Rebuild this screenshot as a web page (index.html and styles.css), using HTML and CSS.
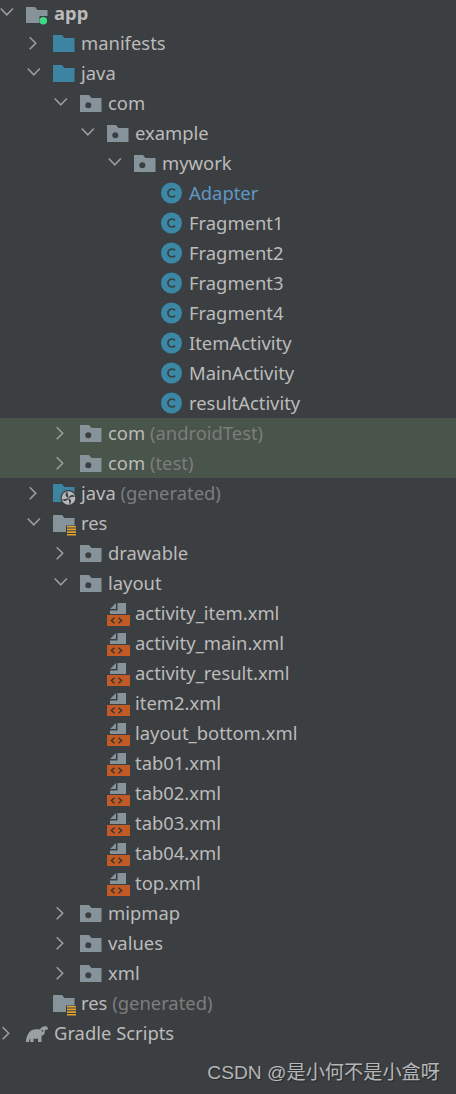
FILE: index.html
```html
<!DOCTYPE html>
<html lang="en">
<head>
<meta charset="utf-8">
<title>Project tree</title>
<link rel="stylesheet" href="styles.css">
</head>
<body>
<svg class="defs" width="0" height="0" aria-hidden="true">
  <defs>
    <symbol id="open" viewBox="0 0 26 30"><path d="M0.7 10.5 L6.8 16.8 L12.9 10.5" fill="none" stroke="#9a9c9e" stroke-width="1.6"/></symbol>
    <symbol id="closed" viewBox="0 0 26 30"><path d="M2.7 9.2 L8.7 15.2 L2.7 21.2" fill="none" stroke="#9a9c9e" stroke-width="1.6"/></symbol>
    <symbol id="pkg" viewBox="0 0 22 30"><path d="M0 7 H9 L11.5 10 H21.5 V24 H0 Z" fill="#87939a"/><circle cx="8.3" cy="17.3" r="3" fill="#3c3f41"/></symbol>
    <symbol id="src" viewBox="0 0 22 30"><path d="M0 7 H9 L11.5 10 H21.5 V24 H0 Z" fill="#3d84a3"/></symbol>
    <symbol id="gen" viewBox="0 0 22 30"><path d="M0 6 H9 L11.5 9 H21.5 V24 H0 Z" fill="#3d84a3"/><circle cx="15.5" cy="20" r="8" fill="#3c3f41"/><circle cx="15.5" cy="20" r="6.8" fill="#b4b8ba"/><path d="M15.5 20 C11.5 18.5 12 15 14.5 13.5 C14.5 16.5 15.5 17.5 15.5 20 C17 16 20.5 16.5 22 18.5 C19 18.5 18 19.5 15.5 20 C19 21.5 18.5 25 16.5 26.5 C16.5 23.5 15.5 22.5 15.5 20 C14 24 10.5 23.5 9 21.5 C12 21.5 13 20.5 15.5 20 Z" fill="#3c3f41"/></symbol>
    <symbol id="res" viewBox="0 0 22 30"><path d="M0 7 H9 L11.5 10 H21.5 V17.5 H13 V24 H0 Z" fill="#87939a"/><path d="M14 18.7 H23 M14 21.4 H23 M14 24.1 H23 M14 26.8 H23" stroke="#e0a22e" stroke-width="1.6"/></symbol>
    <symbol id="module" viewBox="0 0 22 30"><path d="M0 9 H9 L11.5 12 H21.5 V18 H13.5 V25 H0 Z" fill="#87939a"/><circle cx="17.3" cy="22.7" r="3.8" fill="#3ddc84"/></symbol>
    <symbol id="cls" viewBox="0 0 22 30"><circle cx="10.5" cy="15" r="10.5" fill="#3a87a6"/><path d="M14 12.4 A4 4 0 1 0 14 17.6" fill="none" stroke="#3c3f41" stroke-width="1.7"/></symbol>
    <symbol id="xml" viewBox="0 0 22 30"><path d="M3 16 V12.5 H10.5 V5 H19 V16 Z" fill="#87939a"/><path d="M3 11 L9 5 V11 Z" fill="#87939a"/><rect x="0" y="17" width="23" height="11" fill="#c25a26"/><path d="M7.5 19.7 L4.3 22.5 L7.5 25.3 M11.5 19.7 L14.7 22.5 L11.5 25.3" fill="none" stroke="#2f3234" stroke-width="1.3"/></symbol>
    <symbol id="gradle" viewBox="0 0 22 30"><path d="M0 24 C0 18 3 12.5 8 11.5 C10.5 11 12.5 11 14 11.5 C15 9 18 7.5 20.5 8.5 C22 9 22.3 11 21.3 12 C20.3 11 19.3 11.3 19 12.5 L18.5 15.5 C18 17 17 17.5 15.5 17.5 V24 H12 V20.5 C10.5 21 9 21 7.5 20.5 V24 H4.2 V20.5 C3.2 21.5 3 23 3 24 Z" fill="#9ba0a3"/><circle cx="16.5" cy="12.8" r="0.9" fill="#3c3f41"/></symbol>
  </defs>
</svg>
<main class="tree">
  <div class="row d0"><svg class="arrow"><use href="#open"/></svg><svg class="icon"><use href="#module"/></svg><span class="label bold">app</span></div>
  <div class="row d1"><svg class="arrow"><use href="#closed"/></svg><svg class="icon"><use href="#src"/></svg><span class="label">manifests</span></div>
  <div class="row d1"><svg class="arrow"><use href="#open"/></svg><svg class="icon"><use href="#src"/></svg><span class="label">java</span></div>
  <div class="row d2"><svg class="arrow"><use href="#open"/></svg><svg class="icon"><use href="#pkg"/></svg><span class="label">com</span></div>
  <div class="row d3"><svg class="arrow"><use href="#open"/></svg><svg class="icon"><use href="#pkg"/></svg><span class="label">example</span></div>
  <div class="row d4"><svg class="arrow"><use href="#open"/></svg><svg class="icon"><use href="#pkg"/></svg><span class="label">mywork</span></div>
  <div class="row d5"><span class="arrow"></span><svg class="icon"><use href="#cls"/></svg><span class="label blue">Adapter</span></div>
  <div class="row d5"><span class="arrow"></span><svg class="icon"><use href="#cls"/></svg><span class="label">Fragment1</span></div>
  <div class="row d5"><span class="arrow"></span><svg class="icon"><use href="#cls"/></svg><span class="label">Fragment2</span></div>
  <div class="row d5"><span class="arrow"></span><svg class="icon"><use href="#cls"/></svg><span class="label">Fragment3</span></div>
  <div class="row d5"><span class="arrow"></span><svg class="icon"><use href="#cls"/></svg><span class="label">Fragment4</span></div>
  <div class="row d5"><span class="arrow"></span><svg class="icon"><use href="#cls"/></svg><span class="label">ItemActivity</span></div>
  <div class="row d5"><span class="arrow"></span><svg class="icon"><use href="#cls"/></svg><span class="label">MainActivity</span></div>
  <div class="row d5"><span class="arrow"></span><svg class="icon"><use href="#cls"/></svg><span class="label">resultActivity</span></div>
  <div class="row d2 test"><svg class="arrow"><use href="#closed"/></svg><svg class="icon"><use href="#pkg"/></svg><span class="label">com <span class="muted">(androidTest)</span></span></div>
  <div class="row d2 test"><svg class="arrow"><use href="#closed"/></svg><svg class="icon"><use href="#pkg"/></svg><span class="label">com <span class="muted">(test)</span></span></div>
  <div class="row d1"><svg class="arrow"><use href="#closed"/></svg><svg class="icon"><use href="#gen"/></svg><span class="label">java <span class="muted">(generated)</span></span></div>
  <div class="row d1"><svg class="arrow"><use href="#open"/></svg><svg class="icon"><use href="#res"/></svg><span class="label">res</span></div>
  <div class="row d2"><svg class="arrow"><use href="#closed"/></svg><svg class="icon"><use href="#pkg"/></svg><span class="label">drawable</span></div>
  <div class="row d2"><svg class="arrow"><use href="#open"/></svg><svg class="icon"><use href="#pkg"/></svg><span class="label">layout</span></div>
  <div class="row d3"><span class="arrow"></span><svg class="icon"><use href="#xml"/></svg><span class="label">activity_item.xml</span></div>
  <div class="row d3"><span class="arrow"></span><svg class="icon"><use href="#xml"/></svg><span class="label">activity_main.xml</span></div>
  <div class="row d3"><span class="arrow"></span><svg class="icon"><use href="#xml"/></svg><span class="label">activity_result.xml</span></div>
  <div class="row d3"><span class="arrow"></span><svg class="icon"><use href="#xml"/></svg><span class="label">item2.xml</span></div>
  <div class="row d3"><span class="arrow"></span><svg class="icon"><use href="#xml"/></svg><span class="label">layout_bottom.xml</span></div>
  <div class="row d3"><span class="arrow"></span><svg class="icon"><use href="#xml"/></svg><span class="label">tab01.xml</span></div>
  <div class="row d3"><span class="arrow"></span><svg class="icon"><use href="#xml"/></svg><span class="label">tab02.xml</span></div>
  <div class="row d3"><span class="arrow"></span><svg class="icon"><use href="#xml"/></svg><span class="label">tab03.xml</span></div>
  <div class="row d3"><span class="arrow"></span><svg class="icon"><use href="#xml"/></svg><span class="label">tab04.xml</span></div>
  <div class="row d3"><span class="arrow"></span><svg class="icon"><use href="#xml"/></svg><span class="label">top.xml</span></div>
  <div class="row d2"><svg class="arrow"><use href="#closed"/></svg><svg class="icon"><use href="#pkg"/></svg><span class="label">mipmap</span></div>
  <div class="row d2"><svg class="arrow"><use href="#closed"/></svg><svg class="icon"><use href="#pkg"/></svg><span class="label">values</span></div>
  <div class="row d2"><svg class="arrow"><use href="#closed"/></svg><svg class="icon"><use href="#pkg"/></svg><span class="label">xml</span></div>
  <div class="row d1"><span class="arrow"></span><svg class="icon"><use href="#res"/></svg><span class="label">res <span class="muted">(generated)</span></span></div>
  <div class="row d0"><svg class="arrow"><use href="#closed"/></svg><svg class="icon"><use href="#gradle"/></svg><span class="label">Gradle Scripts</span></div>
</main>
<div class="watermark">CSDN @是小何不是小盒呀</div>
</body>
</html>
```
FILE: styles.css
```css
* { box-sizing: border-box; }
html, body { margin: 0; height: 100%; overflow: hidden; }
body {
  position: relative;
  background: #3c3f41;
  color: #bbbbbb;
  font-family: "Noto Sans", "Open Sans", sans-serif;
  font-size: 18.4px;
}
.defs { position: absolute; }
symbol { overflow: visible; }
.tree { margin-top: -2px; display: flex; flex-direction: column; }
.row { display: flex; align-items: center; height: 30px; white-space: nowrap; }
.d0 { padding-left: 0; }
.d1 { padding-left: 27px; }
.d2 { padding-left: 54px; }
.d3 { padding-left: 81px; }
.d4 { padding-left: 108px; }
.d5 { padding-left: 135px; }
.arrow { flex: none; display: block; width: 26px; height: 30px; }
.icon { flex: none; display: block; width: 22px; height: 30px; overflow: visible; }
.label { margin-left: 6px; line-height: 30px; }
.bold { font-weight: 700; }
.blue { color: #5f97c4; }
.muted { color: #7d7d7d; }
.test { background: #49544a; }
.watermark {
  position: absolute;
  right: 16px;
  top: 1061px;
  font-family: "Liberation Sans", "Noto Sans CJK SC", sans-serif;
  font-size: 19.2px;
  line-height: 24px;
  color: #b4b6b7;
  text-shadow: 1px 1px 1px #26282a;
  white-space: nowrap;
}
```
